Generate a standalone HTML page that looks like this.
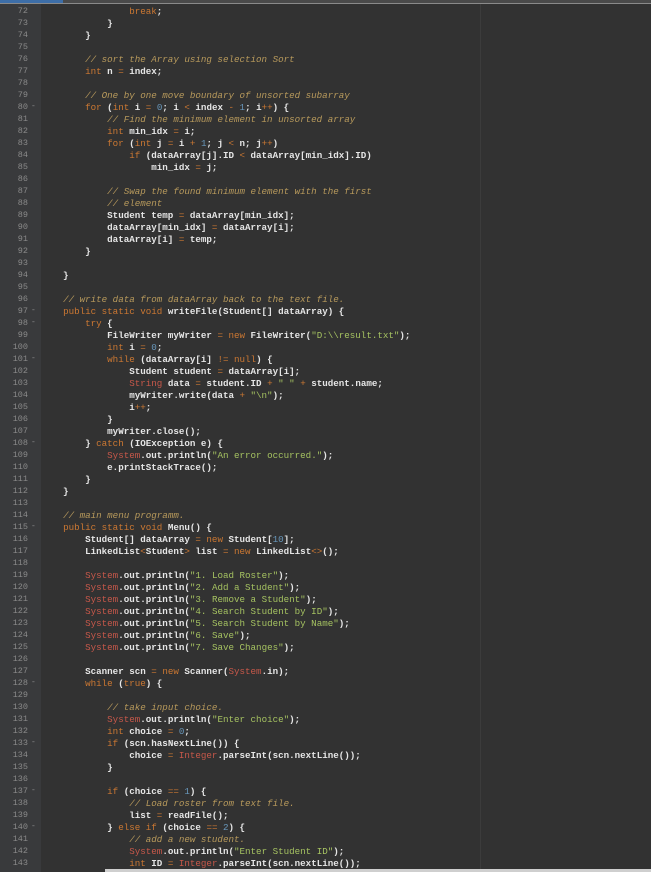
<!DOCTYPE html>
<html><head><meta charset="utf-8"><style>
html,body{margin:0;padding:0;width:651px;height:872px;overflow:hidden;background:#323232;}
#g{position:absolute;left:0;top:0;width:41px;height:872px;background:#393a3c;}
#top{position:absolute;left:0;top:0;width:651px;height:3px;background:#4a4a4a;border-bottom:1px solid #8a8a8a;z-index:5}
#topb{position:absolute;left:0;top:0;width:63px;height:3px;background:#3d6ea8;z-index:6}
#pm{position:absolute;left:480px;top:0;width:1px;height:872px;background:#3c3c3c;}
.l{position:absolute;left:0;height:12px;line-height:12px;white-space:pre;width:651px}
.n{position:absolute;left:0;width:28px;text-align:right;color:#8a8a8a;font:8.5px "Liberation Mono",monospace;}
.f{position:absolute;left:31px;color:#8a8a8a;font:8px "Liberation Mono",monospace;}
.c{position:absolute;left:41px;font:bold 9.2px "Liberation Mono",monospace;color:#e6e6e6;letter-spacing:0px}
.k{color:#cc7832;font-weight:normal}
.s{color:#a5c261;font-weight:normal}
.m{color:#b89a5c;font-style:italic;font-weight:normal}
.d{color:#6897bb;font-weight:normal}
.y{color:#c7584a;font-weight:normal}
</style></head><body>
<div id="g"></div><div id="pm"></div><div id="top"></div><div id="topb"></div>
<div class="l" style="top:-6px"><span class="n">71</span><span class="c">            <span class="k">if</span> (index <span class="k">==</span> dataArray.length) {</span></div>
<div class="l" style="top:6px"><span class="n">72</span><span class="c">                <span class="k">break</span>;</span></div>
<div class="l" style="top:18px"><span class="n">73</span><span class="c">            }</span></div>
<div class="l" style="top:30px"><span class="n">74</span><span class="c">        }</span></div>
<div class="l" style="top:42px"><span class="n">75</span></div>
<div class="l" style="top:54px"><span class="n">76</span><span class="c">        <span class="m">// sort the Array using selection Sort</span></span></div>
<div class="l" style="top:66px"><span class="n">77</span><span class="c">        <span class="k">int</span> n <span class="k">=</span> index;</span></div>
<div class="l" style="top:78px"><span class="n">78</span></div>
<div class="l" style="top:90px"><span class="n">79</span><span class="c">        <span class="m">// One by one move boundary of unsorted subarray</span></span></div>
<div class="l" style="top:102px"><span class="n">80</span><span class="f">-</span><span class="c">        <span class="k">for</span> (<span class="k">int</span> i <span class="k">=</span> <span class="d">0</span>; i <span class="k">&lt;</span> index <span class="k">-</span> <span class="d">1</span>; i<span class="k">++</span>) {</span></div>
<div class="l" style="top:114px"><span class="n">81</span><span class="c">            <span class="m">// Find the minimum element in unsorted array</span></span></div>
<div class="l" style="top:126px"><span class="n">82</span><span class="c">            <span class="k">int</span> min_idx <span class="k">=</span> i;</span></div>
<div class="l" style="top:138px"><span class="n">83</span><span class="c">            <span class="k">for</span> (<span class="k">int</span> j <span class="k">=</span> i <span class="k">+</span> <span class="d">1</span>; j <span class="k">&lt;</span> n; j<span class="k">++</span>)</span></div>
<div class="l" style="top:150px"><span class="n">84</span><span class="c">                <span class="k">if</span> (dataArray[j].ID <span class="k">&lt;</span> dataArray[min_idx].ID)</span></div>
<div class="l" style="top:162px"><span class="n">85</span><span class="c">                    min_idx <span class="k">=</span> j;</span></div>
<div class="l" style="top:174px"><span class="n">86</span></div>
<div class="l" style="top:186px"><span class="n">87</span><span class="c">            <span class="m">// Swap the found minimum element with the first</span></span></div>
<div class="l" style="top:198px"><span class="n">88</span><span class="c">            <span class="m">// element</span></span></div>
<div class="l" style="top:210px"><span class="n">89</span><span class="c">            Student temp <span class="k">=</span> dataArray[min_idx];</span></div>
<div class="l" style="top:222px"><span class="n">90</span><span class="c">            dataArray[min_idx] <span class="k">=</span> dataArray[i];</span></div>
<div class="l" style="top:234px"><span class="n">91</span><span class="c">            dataArray[i] <span class="k">=</span> temp;</span></div>
<div class="l" style="top:246px"><span class="n">92</span><span class="c">        }</span></div>
<div class="l" style="top:258px"><span class="n">93</span></div>
<div class="l" style="top:270px"><span class="n">94</span><span class="c">    }</span></div>
<div class="l" style="top:282px"><span class="n">95</span></div>
<div class="l" style="top:294px"><span class="n">96</span><span class="c">    <span class="m">// write data from dataArray back to the text file.</span></span></div>
<div class="l" style="top:306px"><span class="n">97</span><span class="f">-</span><span class="c">    <span class="k">public static void</span> writeFile(Student[] dataArray) {</span></div>
<div class="l" style="top:318px"><span class="n">98</span><span class="f">-</span><span class="c">        <span class="k">try</span> {</span></div>
<div class="l" style="top:330px"><span class="n">99</span><span class="c">            FileWriter myWriter <span class="k">=</span> <span class="k">new</span> FileWriter(<span class="s">"D:\\result.txt"</span>);</span></div>
<div class="l" style="top:342px"><span class="n">100</span><span class="c">            <span class="k">int</span> i <span class="k">=</span> <span class="d">0</span>;</span></div>
<div class="l" style="top:354px"><span class="n">101</span><span class="f">-</span><span class="c">            <span class="k">while</span> (dataArray[i] <span class="k">!=</span> <span class="k">null</span>) {</span></div>
<div class="l" style="top:366px"><span class="n">102</span><span class="c">                Student student <span class="k">=</span> dataArray[i];</span></div>
<div class="l" style="top:378px"><span class="n">103</span><span class="c">                <span class="y">String</span> data <span class="k">=</span> student.ID <span class="k">+</span> <span class="s">" "</span> <span class="k">+</span> student.name;</span></div>
<div class="l" style="top:390px"><span class="n">104</span><span class="c">                myWriter.write(data <span class="k">+</span> <span class="s">"\n"</span>);</span></div>
<div class="l" style="top:402px"><span class="n">105</span><span class="c">                i<span class="k">++</span>;</span></div>
<div class="l" style="top:414px"><span class="n">106</span><span class="c">            }</span></div>
<div class="l" style="top:426px"><span class="n">107</span><span class="c">            myWriter.close();</span></div>
<div class="l" style="top:438px"><span class="n">108</span><span class="f">-</span><span class="c">        } <span class="k">catch</span> (IOException e) {</span></div>
<div class="l" style="top:450px"><span class="n">109</span><span class="c">            <span class="y">System</span>.out.println(<span class="s">"An error occurred."</span>);</span></div>
<div class="l" style="top:462px"><span class="n">110</span><span class="c">            e.printStackTrace();</span></div>
<div class="l" style="top:474px"><span class="n">111</span><span class="c">        }</span></div>
<div class="l" style="top:486px"><span class="n">112</span><span class="c">    }</span></div>
<div class="l" style="top:498px"><span class="n">113</span></div>
<div class="l" style="top:510px"><span class="n">114</span><span class="c">    <span class="m">// main menu programm.</span></span></div>
<div class="l" style="top:522px"><span class="n">115</span><span class="f">-</span><span class="c">    <span class="k">public static void</span> Menu() {</span></div>
<div class="l" style="top:534px"><span class="n">116</span><span class="c">        Student[] dataArray <span class="k">=</span> <span class="k">new</span> Student[<span class="d">10</span>];</span></div>
<div class="l" style="top:546px"><span class="n">117</span><span class="c">        LinkedList<span class="k">&lt;</span>Student<span class="k">&gt;</span> list <span class="k">=</span> <span class="k">new</span> LinkedList<span class="k">&lt;&gt;</span>();</span></div>
<div class="l" style="top:558px"><span class="n">118</span></div>
<div class="l" style="top:570px"><span class="n">119</span><span class="c">        <span class="y">System</span>.out.println(<span class="s">"1. Load Roster"</span>);</span></div>
<div class="l" style="top:582px"><span class="n">120</span><span class="c">        <span class="y">System</span>.out.println(<span class="s">"2. Add a Student"</span>);</span></div>
<div class="l" style="top:594px"><span class="n">121</span><span class="c">        <span class="y">System</span>.out.println(<span class="s">"3. Remove a Student"</span>);</span></div>
<div class="l" style="top:606px"><span class="n">122</span><span class="c">        <span class="y">System</span>.out.println(<span class="s">"4. Search Student by ID"</span>);</span></div>
<div class="l" style="top:618px"><span class="n">123</span><span class="c">        <span class="y">System</span>.out.println(<span class="s">"5. Search Student by Name"</span>);</span></div>
<div class="l" style="top:630px"><span class="n">124</span><span class="c">        <span class="y">System</span>.out.println(<span class="s">"6. Save"</span>);</span></div>
<div class="l" style="top:642px"><span class="n">125</span><span class="c">        <span class="y">System</span>.out.println(<span class="s">"7. Save Changes"</span>);</span></div>
<div class="l" style="top:654px"><span class="n">126</span></div>
<div class="l" style="top:666px"><span class="n">127</span><span class="c">        Scanner scn <span class="k">=</span> <span class="k">new</span> Scanner(<span class="y">System</span>.in);</span></div>
<div class="l" style="top:678px"><span class="n">128</span><span class="f">-</span><span class="c">        <span class="k">while</span> (<span class="k">true</span>) {</span></div>
<div class="l" style="top:690px"><span class="n">129</span></div>
<div class="l" style="top:702px"><span class="n">130</span><span class="c">            <span class="m">// take input choice.</span></span></div>
<div class="l" style="top:714px"><span class="n">131</span><span class="c">            <span class="y">System</span>.out.println(<span class="s">"Enter choice"</span>);</span></div>
<div class="l" style="top:726px"><span class="n">132</span><span class="c">            <span class="k">int</span> choice <span class="k">=</span> <span class="d">0</span>;</span></div>
<div class="l" style="top:738px"><span class="n">133</span><span class="f">-</span><span class="c">            <span class="k">if</span> (scn.hasNextLine()) {</span></div>
<div class="l" style="top:750px"><span class="n">134</span><span class="c">                choice <span class="k">=</span> <span class="y">Integer</span>.parseInt(scn.nextLine());</span></div>
<div class="l" style="top:762px"><span class="n">135</span><span class="c">            }</span></div>
<div class="l" style="top:774px"><span class="n">136</span></div>
<div class="l" style="top:786px"><span class="n">137</span><span class="f">-</span><span class="c">            <span class="k">if</span> (choice <span class="k">==</span> <span class="d">1</span>) {</span></div>
<div class="l" style="top:798px"><span class="n">138</span><span class="c">                <span class="m">// Load roster from text file.</span></span></div>
<div class="l" style="top:810px"><span class="n">139</span><span class="c">                list <span class="k">=</span> readFile();</span></div>
<div class="l" style="top:822px"><span class="n">140</span><span class="f">-</span><span class="c">            } <span class="k">else if</span> (choice <span class="k">==</span> <span class="d">2</span>) {</span></div>
<div class="l" style="top:834px"><span class="n">141</span><span class="c">                <span class="m">// add a new student.</span></span></div>
<div class="l" style="top:846px"><span class="n">142</span><span class="c">                <span class="y">System</span>.out.println(<span class="s">"Enter Student ID"</span>);</span></div>
<div class="l" style="top:858px"><span class="n">143</span><span class="c">                <span class="k">int</span> ID <span class="k">=</span> <span class="y">Integer</span>.parseInt(scn.nextLine());</span></div>
<div style="position:absolute;left:105px;top:869px;width:546px;height:3px;background:#cfcfcf"></div>
</body></html>
